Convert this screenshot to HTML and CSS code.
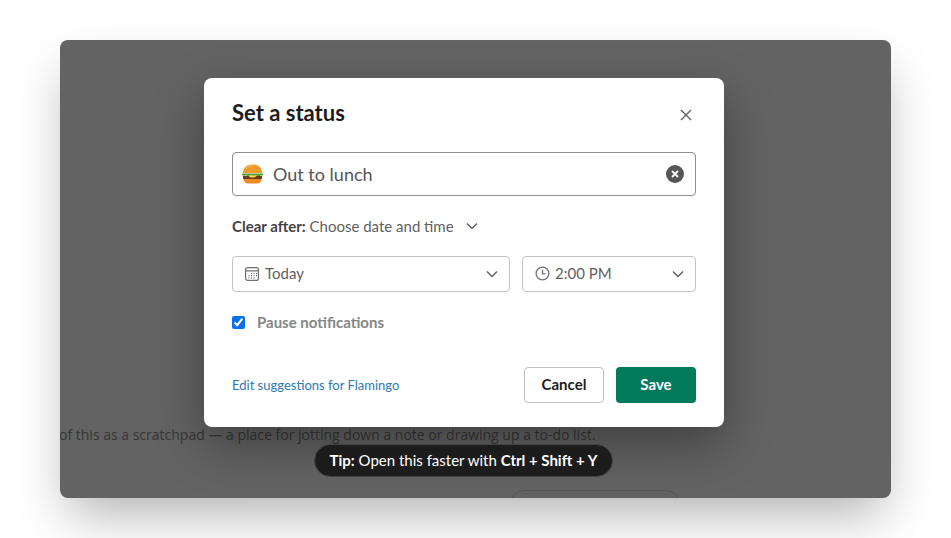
FILE: index.html
```html
<!DOCTYPE html>
<html lang="en">
<head>
  <meta charset="UTF-8">
  <meta name="viewport" content="width=device-width, initial-scale=1.0">
  <title>Set a status</title>
  <link rel="stylesheet" href="styles.css">
</head>
<body>
  <div class="window">
    <div class="doc">
      <p class="doc-text">of this as a scratchpad — a place for jotting down a note or drawing up a to-do list.</p>
      <div class="doc-button"></div>
    </div>

    <div class="scrim">
      <div class="modal">
        <div class="modal-header">
          <h1>Set a status</h1>
          <button class="close-button" aria-label="Close">
            <svg width="12" height="12" viewBox="0 0 12 12"><path d="M1 1l10 10M11 1L1 11" stroke="#616061" stroke-width="1.4" fill="none"/></svg>
          </button>
        </div>

        <div class="status-input">
          <svg class="burger" width="23" height="20" viewBox="0 0 23 20">
            <path d="M2 9C2 3.500 6 .5 11.500 .5S21 3.500 21 9z" fill="#f09a2c"/>
            <path d="M5 4.500C7 2.500 9 1.800 11.500 1.800" stroke="#f9c069" stroke-width="1" fill="none"/>
            <path d="M1 9.500h21c.6 1.800-1 2.500-2.500 2l-2 1-2.500-1-2.500 1-2.500-1-2.500 1-2-1C2 12 .4 11.300 1 9.500z" fill="#5c9e31"/>
            <path d="M2 12h19v3H2z" fill="#6d3c1e"/>
            <path d="M7 11.500h9l-2.500 2h-4z" fill="#fbd54e"/>
            <path d="M2.500 15h18c0 2.800-2 4.500-4.500 4.500H7c-2.500 0-4.500-1.700-4.500-4.500z" fill="#e98a26"/>
          </svg>
          <span class="status-text">Out to lunch</span>
          <span class="clear-icon">
            <svg width="8" height="8" viewBox="0 0 8 8"><path d="M1 1l6 6M7 1L1 7" stroke="#fff" stroke-width="1.800" fill="none"/></svg>
          </span>
        </div>

        <div class="clear-after">
          <span><b>Clear after:</b> Choose date and time</span>
          <svg class="clear-chevron" width="12" height="8" viewBox="0 0 12 8"><path d="M1 1.500l5 5 5-5" stroke="#616061" stroke-width="1.500" fill="none"/></svg>
        </div>

        <div class="pickers">
          <div class="picker picker-date">
            <svg width="14" height="14" viewBox="0 0 14 14">
              <rect x=".6" y=".6" width="12.800" height="12.800" rx="2" fill="none" stroke="#717071" stroke-width="1.200"/>
              <path d="M1 3.800h12" stroke="#717071" stroke-width="1.200"/>
              <path d="M6 6.500h1M8.500 6.500h1M11 6.500h1M3.500 8.700h1M6 8.700h1M8.500 8.700h1M11 8.700h1M3.500 10.900h1M6 10.900h1M8.500 10.900h1" stroke="#717071" stroke-width="1.200"/>
            </svg>
            <span class="picker-text">Today</span>
            <svg class="picker-chevron" width="12" height="8" viewBox="0 0 12 8"><path d="M1 1.500l5 5 5-5" stroke="#616061" stroke-width="1.500" fill="none"/></svg>
          </div>
          <div class="picker picker-time">
            <svg width="15" height="15" viewBox="0 0 15 15">
              <circle cx="7.500" cy="7.500" r="6.400" fill="none" stroke="#717071" stroke-width="1.300"/>
              <path d="M7.500 3.800v4h3" stroke="#717071" stroke-width="1.300" fill="none"/>
            </svg>
            <span class="picker-text">2:00 PM</span>
            <svg class="picker-chevron" width="12" height="8" viewBox="0 0 12 8"><path d="M1 1.500l5 5 5-5" stroke="#616061" stroke-width="1.500" fill="none"/></svg>
          </div>
        </div>

        <label class="pause-row">
          <input type="checkbox" checked>
          <span>Pause notifications</span>
        </label>

        <div class="modal-footer">
          <a class="edit-link" href="#">Edit suggestions for Flamingo</a>
          <div class="footer-buttons">
            <button class="btn btn-cancel">Cancel</button>
            <button class="btn btn-save">Save</button>
          </div>
        </div>
      </div>
    </div>

    <div class="tip"><b>Tip:</b> Open this faster with <b>Ctrl + Shift + Y</b></div>
  </div>
</body>
</html>
```

FILE: styles.css
```css
html, body {
  height: 100%;
}
body {
  margin: 0;
  padding: 40px 60px;
  box-sizing: border-box;
  background: #fff;
  font-family: Lato, 'Open Sans', sans-serif;
  overflow: hidden;
}
.window {
  position: relative;
  height: 458px;
  border-radius: 8px;
  background: #fff;
  box-shadow: 0 24px 48px -8px rgba(0, 0, 0, 0.3);
  overflow: hidden;
}
.doc {
  padding-top: 385px;
}
.doc-text {
  margin: 0 0 0 -1px;
  font-family: 'Open Sans', sans-serif;
  font-size: 14px;
  line-height: 20px;
  color: #8c8c8c;
  white-space: nowrap;
}
.doc-button {
  width: 168px;
  height: 40px;
  margin: 45px 0 0 450px;
  border: 1px solid #ddd;
  border-radius: 14px;
}
.scrim {
  position: absolute;
  top: 0;
  left: 0;
  right: 0;
  bottom: 0;
  padding: 38px 0 0 144px;
  background: rgba(0, 0, 0, 0.61);
}
.modal {
  width: 520px;
  height: 349px;
  padding: 0 28px;
  box-sizing: border-box;
  background: #fff;
  border-radius: 8px;
  box-shadow: 0 18px 48px rgba(0, 0, 0, 0.35);
  color: #1d1c1d;
}
.modal-header {
  display: flex;
  align-items: center;
  justify-content: space-between;
  height: 74px;
}
h1 {
  margin: 0 0 4px;
  font-size: 22px;
  line-height: 30px;
  font-weight: 700;
  color: #1d1c1d;
}
.close-button {
  display: flex;
  padding: 0;
  margin: 0 4px 0 0;
  border: none;
  background: none;
}
.status-input {
  display: flex;
  align-items: center;
  height: 44px;
  padding: 0 11px 0 8px;
  box-sizing: border-box;
  border: 1px solid #8d8d8d;
  border-radius: 4px;
}
.burger {
  flex: none;
}
.status-text {
  flex: 1;
  margin-left: 9px;
  font-size: 18px;
  color: #565556;
}
.clear-icon {
  display: flex;
  align-items: center;
  justify-content: center;
  width: 18px;
  height: 18px;
  border-radius: 50%;
  background: #555;
}
.clear-after {
  display: flex;
  align-items: center;
  height: 20px;
  margin-top: 20px;
  font-size: 15px;
  color: #616061;
}
.clear-after b {
  color: #454245;
}
.clear-chevron {
  margin-left: 12px;
}
.pickers {
  display: flex;
  gap: 12px;
  margin-top: 20px;
}
.picker {
  display: flex;
  align-items: center;
  height: 36px;
  padding: 0 11px 1px 12px;
  box-sizing: border-box;
  border: 1px solid #c4c4c4;
  border-radius: 4px;
  font-size: 15px;
  color: #616061;
}
.picker-date {
  width: 278px;
}
.picker-time {
  width: 174px;
}
.picker-text {
  flex: 1;
  margin: 0 0 2px 6px;
}
.picker-time .picker-text {
  margin-left: 5px;
}
.pause-row {
  display: flex;
  align-items: center;
  gap: 12px;
  height: 20px;
  margin-top: 20px;
  font-size: 15px;
  font-weight: 700;
  color: #868686;
}
.pause-row input {
  flex: none;
  width: 13px;
  height: 13px;
  margin: 0;
  accent-color: #0b6fe8;
}
.modal-footer {
  display: flex;
  align-items: center;
  justify-content: space-between;
  margin-top: 35px;
}
.edit-link {
  font-size: 13px;
  color: #2f78b2;
  text-decoration: none;
}
.footer-buttons {
  display: flex;
  gap: 12px;
}
.btn {
  width: 80px;
  height: 36px;
  padding: 0 0 2px;
  border-radius: 4px;
  font-family: inherit;
  font-size: 15px;
  font-weight: 700;
}
.btn-cancel {
  background: #fff;
  border: 1px solid #bdbdbd;
  color: #1d1c1d;
}
.btn-save {
  background: #007a5a;
  border: none;
  color: #fff;
}
.tip {
  position: absolute;
  top: 404px;
  left: 254px;
  width: 299px;
  height: 33px;
  box-sizing: border-box;
  border: 1px solid #444;
  border-radius: 17px;
  background: #1d1c1d;
  color: #fff;
  font-size: 15px;
  line-height: 31px;
  text-align: center;
  white-space: nowrap;
}
```
